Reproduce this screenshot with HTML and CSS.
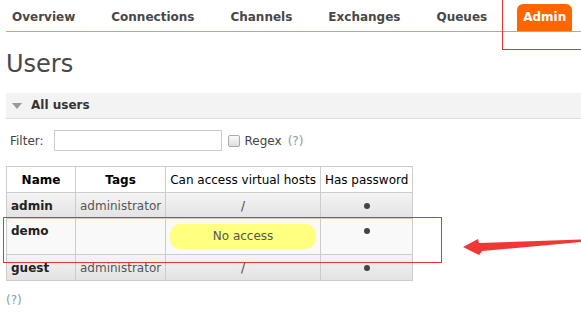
FILE: index.html
```html
<!DOCTYPE html>
<html>
<head>
    <meta charset="utf-8">
    <title>Users - RabbitMQ Management</title>
    <link rel="stylesheet" href="styles.css">
</head>
<body>
<div id="menu">
    <ul class="tabs">
        <li><a href="#">Overview</a></li>
        <li><a href="#">Connections</a></li>
        <li><a href="#">Channels</a></li>
        <li><a href="#">Exchanges</a></li>
        <li><a href="#">Queues</a></li>
        <li><a href="#" class="selected">Admin</a></li>
    </ul>
</div>
<div id="main">
    <h1>Users</h1>
    <div class="section">
        <h2 class="section-head"><span class="tri"></span>All users</h2>
        <div class="filter">
            <label>Filter:</label>
            <input type="text" class="filter-box"/>
            <span class="check"></span>
            <span>Regex</span>
            <span class="help">(?)</span>
        </div>
        <table class="list">
            <thead>
                <tr>
                    <th class="b">Name</th>
                    <th class="b">Tags</th>
                    <th>Can access virtual hosts</th>
                    <th>Has password</th>
                </tr>
            </thead>
            <tbody>
                <tr>
                    <td class="name">admin</td>
                    <td class="tags">administrator</td>
                    <td class="c">/</td>
                    <td class="c"><span class="dot"></span></td>
                </tr>
                <tr class="alt">
                    <td class="name">demo</td>
                    <td class="tags"></td>
                    <td class="c"><div class="warning">No access</div></td>
                    <td class="c"><span class="dot"></span></td>
                </tr>
                <tr>
                    <td class="name">guest</td>
                    <td class="tags">administrator</td>
                    <td class="c">/</td>
                    <td class="c"><span class="dot"></span></td>
                </tr>
            </tbody>
        </table>
        <p class="help foot">(?)</p>
    </div>
</div>

<!-- 标注 -->
<div class="mark mark-admin"></div>
<div class="mark mark-row"></div>
<svg class="arrow" width="581" height="318" viewBox="0 0 581 318">
    <polygon points="463,247 478,239 479,243 581,239.5 581,242 482,251 479,255" fill="#f23535"/>
</svg>
</body>
</html>
```

FILE: styles.css
```css
body { margin: 0; font-family: "DejaVu Sans", Verdana, sans-serif; font-size: 12px; color: #444; background: #fff; position: relative; overflow: hidden; }
#menu { margin-left: 6px; border-bottom: 1px solid #f0a030; }
.tabs { list-style: none; margin: 0; padding: 4px 0 0 0; display: flex; gap: 24px; }
.tabs a { display: block; padding: 0 6px; height: 27px; line-height: 27px; font-weight: bold; color: #484848; text-decoration: none; border-radius: 6px 6px 0 0; }
.tabs a.selected { background: #f60; color: #fff; }
#main { padding: 0 0 0 6px; }
h1 { margin: 0; padding-top: 17px; height: 44px; font-size: 24px; font-weight: normal; color: #484848; line-height: 30px; }
.section-head { margin: 0; height: 25px; line-height: 25px; background: #f3f3f3; border-bottom: 1px solid #ddd; font-size: 12px; font-weight: bold; color: #333; display: flex; align-items: center; }
.tri { width: 0; height: 0; border-left: 5px solid transparent; border-right: 5px solid transparent; border-top: 6px solid #999; margin: 0 9px 0 6px; }
.filter { display: flex; align-items: center; padding: 11px 0 0 4px; height: 21px; }
.filter label { margin-right: 10px; }
.filter-box { width: 168px; height: 21px; box-sizing: border-box; border: 1px solid #ccc; margin: 0; padding: 0 3px; }
.check { width: 10px; height: 10px; border: 1px solid #aaa; border-radius: 2px; background: linear-gradient(#fafafa, #ddd); margin: 0 5px 0 6px; }
.help { color: #8a9aaa; margin-left: 6px; }
.list { border-collapse: collapse; margin-top: 15px; }
.list th, .list td { border: 1px solid #ccc; padding: 0 4px; height: 26px; box-sizing: border-box; vertical-align: middle; white-space: nowrap; }
.list th { background: #fff; color: #000; font-weight: normal; }
.list th.b { font-weight: bold; }
.list tbody tr { background: linear-gradient(#f4f4f4, #e2e2e2); }
.list tbody tr.alt { background: #f9f9f9; }
.list tr.alt td { vertical-align: top; padding-top: 5px; padding-bottom: 5px; height: 36px; }
.list th:nth-child(1) { width: 69px; }
.list th:nth-child(2) { width: 90px; }
td.name { font-weight: bold; color: #222; }
td.tags { color: #555; }
td.c { text-align: center; color: #444; }
.dot { display: inline-block; width: 6px; height: 6px; border-radius: 50%; background: #444; vertical-align: middle; }
.alt .dot { vertical-align: top; margin-top: 4px; }
.warning { background: #ffff80; border-radius: 10px; height: 25px; line-height: 25px; color: #555; text-align: center; }
.foot { margin: 12px 0 0 0; }
.mark { position: absolute; border: 1px solid #ee3030; }
.mark-admin { left: 502px; top: -2px; width: 120px; height: 50px; }
.mark-row { left: 3px; top: 217px; width: 437px; height: 44px; }
.arrow { position: absolute; left: 0; top: 0; }
```
